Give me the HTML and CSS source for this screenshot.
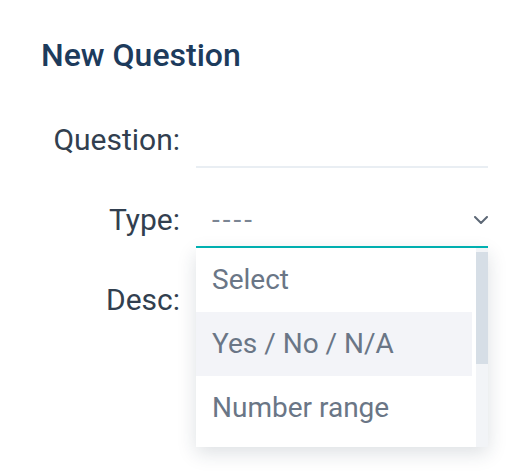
FILE: index.html
```html
<!DOCTYPE html>
<html lang="en">
<head>
<meta charset="utf-8">
<title>New Question</title>
<link rel="stylesheet" href="styles.css">
</head>
<body>
<main class="panel">
  <h1 class="title">New Question</h1>
  <form class="form">
    <div class="row">
      <label class="label" for="q">Question:</label>
      <div class="field" id="q"></div>
    </div>
    <div class="row">
      <label class="label">Type:</label>
      <div class="select-wrap">
        <div class="field select">
          <span class="placeholder">----</span>
          <svg class="chevron" width="14" height="8" viewBox="0 0 14 8" aria-hidden="true"><polyline points="1,1 7,7 13,1" fill="none" stroke="currentColor" stroke-width="2" stroke-linecap="round" stroke-linejoin="round"/></svg>
        </div>
        <div class="menu">
          <ul class="options">
            <li class="option">Select</li>
            <li class="option active">Yes / No / N/A</li>
            <li class="option">Number range</li>
          </ul>
          <div class="scrollbar"><div class="thumb"></div></div>
        </div>
      </div>
    </div>
    <div class="row">
      <label class="label">Desc:</label>
      <div class="field plain"></div>
    </div>
  </form>
</main>
</body>
</html>
```
FILE: styles.css
```css
* { box-sizing: border-box; }
html, body { margin: 0; padding: 0; background: #ffffff; }
body {
  font-family: Roboto, "Liberation Sans", Arial, sans-serif;
  width: 528px;
  height: 476px;
  overflow: hidden;
}
.panel { padding-top: 35px; }
.title {
  margin: 0 0 13px 41px;
  font-size: 32px;
  line-height: 40px;
  font-weight: 500;
  color: #1d3b5c;
}
.form { display: flex; flex-direction: column; }
.row {
  display: grid;
  grid-template-columns: 180px 292px;
  column-gap: 16px;
  height: 80px;
  align-items: end;
}
.label {
  text-align: right;
  font-size: 30px;
  line-height: 36px;
  padding-bottom: 10px;
  color: #323f4f;
}
.field {
  height: 46px;
  border-bottom: 2px solid #e9eef3;
  padding-bottom: 8px;
  font-size: 28px;
  line-height: 36px;
}
.field.plain { border-bottom-color: transparent; }
.select-wrap { position: relative; }
.select {
  display: flex;
  align-items: center;
  justify-content: space-between;
  border-bottom-color: #00b4b4;
}
.placeholder {
  color: #7b8593;
  padding-left: 16px;
  line-height: 36px;
  letter-spacing: 3px;
}
.chevron { color: #5d6876; display: block; }
.menu {
  position: absolute;
  top: 100%;
  left: 0;
  width: 292px;
  height: 199px;
  display: flex;
  background: #ffffff;
  box-shadow: 0 6px 18px rgba(30, 45, 65, 0.15);
  z-index: 2;
}
.options {
  list-style: none;
  margin: 0;
  padding: 0 0 7px;
  flex: 1;
}
.option {
  height: 64px;
  line-height: 64px;
  padding-left: 16px;
  font-size: 28px;
  color: #6a7686;
  white-space: nowrap;
}
.option.active { background: #f3f4f8; }
.scrollbar {
  width: 12px;
  margin-left: 4px;
  background: #f2f4f7;
  padding-top: 4px;
}
.thumb { height: 112px; background: #d6dee6; }
```
